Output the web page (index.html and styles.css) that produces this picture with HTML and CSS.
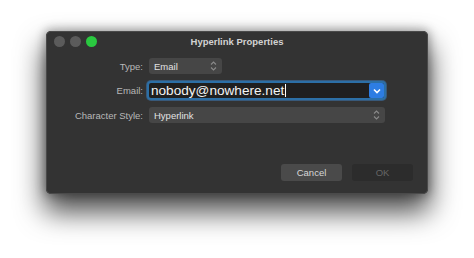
FILE: index.html
```html
<!DOCTYPE html>
<html lang="en">
<head>
    <meta charset="UTF-8">
    <title>Hyperlink Properties</title>
    <link rel="stylesheet" href="styles.css">
</head>
<body>
    <div class="window">
        <div class="titlebar">
            <div class="lights">
                <span class="light"></span>
                <span class="light"></span>
                <span class="light green"></span>
            </div>
            <div class="title">Hyperlink Properties</div>
        </div>
        <div class="form">
            <label class="label">Type:</label>
            <div class="popup short">
                <span>Email</span>
                <svg class="updown" width="7" height="10" viewBox="0 0 7 10"><path d="M1 3.5 3.5 1 6 3.5M1 6.5 3.5 9 6 6.5" fill="none" stroke="#8a8a8a" stroke-width="1.1"/></svg>
            </div>
            <label class="label">Email:</label>
            <div class="combo">
                <span class="combo-text">nobody@nowhere.net<span class="caret"></span></span>
                <span class="combo-btn"><svg width="8" height="6" viewBox="0 0 8 6"><path d="M1 1.5 4 4.5 7 1.5" fill="none" stroke="#fff" stroke-width="1.6"/></svg></span>
            </div>
            <label class="label">Character Style:</label>
            <div class="popup">
                <span>Hyperlink</span>
                <svg class="updown" width="7" height="10" viewBox="0 0 7 10"><path d="M1 3.5 3.5 1 6 3.5M1 6.5 3.5 9 6 6.5" fill="none" stroke="#8a8a8a" stroke-width="1.1"/></svg>
            </div>
        </div>
        <div class="buttons">
            <button class="btn">Cancel</button>
            <button class="btn disabled">OK</button>
        </div>
    </div>
</body>
</html>
```

FILE: styles.css
```css
body {
    margin: 0;
    background: #ffffff;
    font-family: "Liberation Sans", Arial, sans-serif;
    font-size: 9.5px;
    height: 258px;
}
.window {
    margin: 31px 0 0 46px;
    width: 382px;
    height: 163px;
    background: #333333;
    border-radius: 5px;
    box-shadow: 0 0 0 1px #4a4a4a inset, 0 16px 28px 2px rgba(0, 0, 0, 0.7), 0 0 10px 2px rgba(0, 0, 0, 0.3);
    display: flex;
    flex-direction: column;
}
.titlebar {
    height: 20px;
    display: flex;
    align-items: center;
    position: relative;
}
.lights {
    display: flex;
    gap: 5px;
    padding-left: 8px;
    padding-top: 1px;
}
.light {
    width: 11px;
    height: 11px;
    border-radius: 50%;
    background: #5b5b5b;
}
.light.green {
    background: #2ac940;
}
.title {
    position: absolute;
    left: 0;
    right: 0;
    text-align: center;
    color: #d2d2d2;
    font-weight: bold;
    font-size: 9.5px;
    top: 5px;
}
.form {
    display: grid;
    grid-template-columns: 97px 236px;
    column-gap: 6px;
    row-gap: 7px;
    margin-top: 7px;
    align-items: center;
}
.label {
    text-align: right;
    color: #b8b8b8;
}
.popup {
    height: 16px;
    background: #464646;
    border-radius: 3px;
    display: flex;
    align-items: center;
    justify-content: space-between;
    padding: 0 5px 0 5px;
    color: #e2e2e2;
    box-sizing: border-box;
}
.popup.short {
    width: 73px;
}
.combo {
    margin-left: -2px;
    height: 19px;
    box-sizing: border-box;
    border: 2px solid #2c6fa6;
    box-shadow: 0 0 0 1px rgba(60, 120, 180, 0.55);
    border-radius: 4px;
    background: #1f1f1f;
    display: flex;
    align-items: center;
    justify-content: space-between;
    width: 239px;
}
.combo-text {
    color: #f4f4f4;
    font-size: 13.6px;
    padding-left: 2px;
    display: flex;
    align-items: center;
}
.caret {
    display: inline-block;
    width: 1px;
    height: 13px;
    background: #ffffff;
    margin-left: 1px;
}
.combo-btn {
    width: 15px;
    height: 15px;
    background: #2d7de3;
    border-radius: 2px;
    display: flex;
    align-items: center;
    justify-content: center;
}
.buttons {
    display: flex;
    justify-content: flex-end;
    gap: 10px;
    padding-right: 15px;
    margin-top: 41px;
}
.btn {
    width: 61px;
    height: 17px;
    border: none;
    border-radius: 3px;
    background: #4a4a4a;
    color: #d8d8d8;
    font-family: "Liberation Sans", Arial, sans-serif;
    font-size: 9.5px;
    padding: 0;
}
.btn.disabled {
    background: #2c2c2c;
    color: #666666;
}
```
